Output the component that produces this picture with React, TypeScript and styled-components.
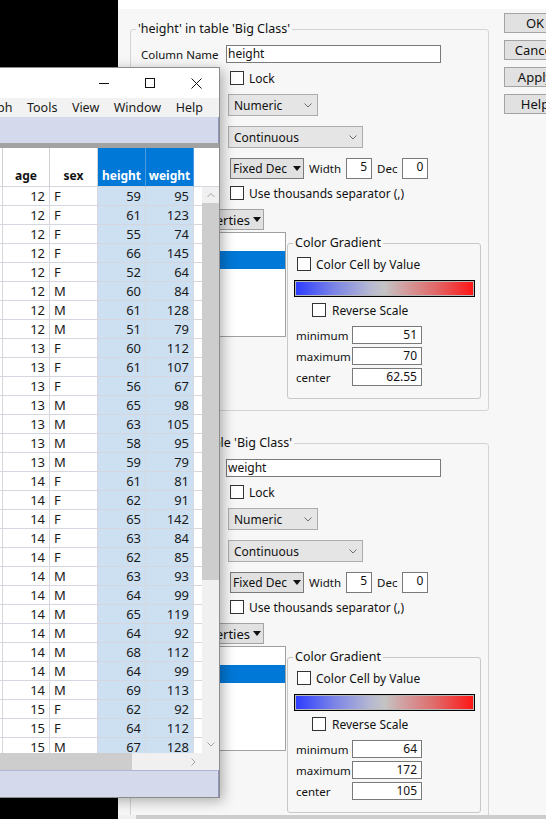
import React from 'react';
import styled, { createGlobalStyle } from 'styled-components';

const GlobalStyle = createGlobalStyle`
  html, body {
    margin: 0;
    padding: 0;
    background: #000;
  }
  body {
    font-family: "Noto Sans", "Liberation Sans", sans-serif;
  }
`;

const Desktop = styled.div`
  position: relative;
  width: 546px;
  height: 819px;
  overflow: hidden;
  background: #000;
`;

/* ---------- column info dialog ---------- */

const Dialog = styled.div`
  position: absolute;
  left: 118px;
  top: 0;
  width: 428px;
  height: 819px;
  display: flex;
  flex-direction: column;
  background: #f7f7f7;
  color: #111;
  font-size: 12px;
`;

const DialogTop = styled.div`
  height: 9px;
  flex-shrink: 0;
  background: #fff;
`;

const DialogBody = styled.div`
  flex: 1;
  min-height: 0;
  display: flex;
  overflow: hidden;
`;

const Pane = styled.div`
  width: 376px;
  flex-shrink: 0;
  box-sizing: border-box;
  padding: 12px 0 0 12px;
  display: flex;
  flex-direction: column;
  gap: 24px;
`;

const ButtonCol = styled.div`
  display: flex;
  flex-direction: column;
  gap: 7px;
  padding-top: 4px;
  margin-left: 10px;
  flex-shrink: 0;
`;

const DlgButton = styled.div`
  width: 62px;
  height: 20px;
  box-sizing: border-box;
  border: 1px solid #a3a3a3;
  background: #e1e1e1;
  font-size: 13px;
  line-height: 18px;
  text-align: center;
`;

const DialogHScroll = styled.div`
  height: 4px;
  flex-shrink: 0;
  display: flex;
  padding-left: 18px;
  background: #f0f0f0;
`;

const HThumb = styled.div`
  flex: 1;
  background: #cdcdcd;
`;

const GroupBox = styled.fieldset`
  margin: 0;
  width: 359px;
  min-width: 0;
  box-sizing: border-box;
  border: 1px solid #d4d4d4;
  border-radius: 3px;
  padding: 0 6px 11px 4px;
  flex-shrink: 0;
`;

const GroupTitle = styled.legend`
  margin-left: 1px;
  padding: 0 2px;
  font-size: 12.5px;
  line-height: 16px;
`;

const Form = styled.div`
  padding-left: 6px;
  display: flex;
  flex-direction: column;
`;

const FieldRow = styled.div<{ $top: number; $h: number }>`
  display: flex;
  align-items: center;
  height: ${(p) => p.$h}px;
  margin-top: ${(p) => p.$top}px;
  white-space: nowrap;
`;

const FieldLabel = styled.div`
  width: 85px;
  flex-shrink: 0;
  font-size: 11.5px;
`;

const TextBox = styled.div<{ $w: number; $shift?: number; $right?: boolean }>`
  width: ${(p) => p.$w}px;
  height: 100%;
  margin-left: ${(p) => p.$shift ?? 0}px;
  box-sizing: border-box;
  border: 1px solid #7a7a7a;
  background: #fff;
  padding: 0 ${(p) => (p.$right ? '4px' : '1px')};
  text-align: ${(p) => (p.$right ? 'right' : 'left')};
  font-size: 12px;
  line-height: 15px;
  flex-shrink: 0;
`;

const Check = styled.span<{ $shift: number }>`
  width: 14px;
  height: 14px;
  margin-left: ${(p) => p.$shift}px;
  box-sizing: border-box;
  border: 1px solid #333;
  background: #fff;
  flex-shrink: 0;
`;

const CheckText = styled.span<{ $gap: number }>`
  margin-left: ${(p) => p.$gap}px;
  font-size: 12px;
`;

const Select = styled.div<{ $w: number }>`
  width: ${(p) => p.$w}px;
  height: 100%;
  margin-left: 2px;
  box-sizing: border-box;
  border: 1px solid #adadad;
  background: #e5e5e5;
  display: flex;
  align-items: center;
  justify-content: space-between;
  padding: 0 5px 0 5px;
  font-size: 12px;
  flex-shrink: 0;
`;

const FormatSelect = styled.div`
  width: 74px;
  height: 100%;
  margin-left: 4px;
  box-sizing: border-box;
  border: 1px solid #7a7a7a;
  background: #e1e1e1;
  display: flex;
  align-items: center;
  justify-content: space-between;
  padding: 0 2px 0 2px;
  font-size: 12px;
  flex-shrink: 0;
`;

const InlineText = styled.span<{ $gap: number }>`
  margin-left: ${(p) => p.$gap}px;
  font-size: 11.5px;
`;

const PropsButton = styled.div`
  width: 128px;
  height: 100%;
  margin-left: -5px;
  box-sizing: border-box;
  border: 1px solid #a3a3a3;
  background: #e1e1e1;
  display: flex;
  align-items: center;
  justify-content: flex-end;
  gap: 3px;
  padding-right: 2px;
  font-size: 13px;
  overflow: hidden;

  & > * {
    flex-shrink: 0;
  }
`;

const LowerRow = styled.div`
  display: flex;
  align-items: flex-start;
  margin-top: 2px;
`;

const ListBox = styled.div`
  width: 145px;
  height: 105px;
  box-sizing: border-box;
  border: 1px solid #a0a0a0;
  background: #fff;
  flex-shrink: 0;
`;

const ListItem = styled.div<{ $sel?: boolean }>`
  height: 18px;
  line-height: 18px;
  padding-left: 3px;
  background: ${(p) => (p.$sel ? '#0078d7' : 'transparent')};
  color: ${(p) => (p.$sel ? '#fff' : '#111')};
`;

const GradientBox = styled.fieldset`
  margin: 3px 0 0 1px;
  width: 194px;
  min-width: 0;
  box-sizing: border-box;
  border: 1px solid #c8c8c8;
  border-radius: 3px;
  padding: 0 5px 12px 5px;
  display: flex;
  flex-direction: column;
`;

const GradientTitle = styled.legend`
  padding: 0 2px;
  font-size: 12.5px;
  line-height: 16px;
`;

const ColorBar = styled.div`
  width: 181px;
  height: 17px;
  margin: 9px 0 0 1px;
  box-sizing: border-box;
  border: 1px solid #000;
  box-shadow: inset 0 0 0 1px #b8b8b8;
  background: linear-gradient(
    to right,
    #2b3bff 0%,
    #7b84e6 22%,
    #b6b8d2 42%,
    #c4c4c4 50%,
    #d1a2a2 60%,
    #e06a6a 78%,
    #ff1414 100%
  );
`;

const ValueLabel = styled.div`
  width: 56px;
  padding-left: 3px;
  flex-shrink: 0;
  font-size: 11.5px;
`;

const Chevron = () => (
  <svg width="8" height="5" viewBox="0 0 8 5" style={{ flexShrink: 0 }}>
    <polyline points="0.5,0.5 4,4 7.5,0.5" fill="none" stroke="#6e6e6e" strokeWidth="1" />
  </svg>
);

const Caret = () => (
  <svg width="8" height="5" viewBox="0 0 8 5" style={{ flexShrink: 0 }}>
    <polygon points="0,0 8,0 4,5" fill="#111" />
  </svg>
);

interface PanelProps {
  name: string;
  min: string;
  max: string;
  center: string;
}

const ColumnPanel = ({ name, min, max, center }: PanelProps) => (
  <GroupBox>
    <GroupTitle>'{name}' in table 'Big Class'</GroupTitle>
    <Form>
      <FieldRow $top={8} $h={18}>
        <FieldLabel>Column Name</FieldLabel>
        <TextBox $w={215}>{name}</TextBox>
      </FieldRow>
      <FieldRow $top={8} $h={14}>
        <FieldLabel />
        <Check $shift={4} />
        <CheckText $gap={5}>Lock</CheckText>
      </FieldRow>
      <FieldRow $top={9} $h={22}>
        <FieldLabel />
        <Select $w={90}>
          Numeric
          <Chevron />
        </Select>
      </FieldRow>
      <FieldRow $top={10} $h={22}>
        <FieldLabel />
        <Select $w={135}>
          Continuous
          <Chevron />
        </Select>
      </FieldRow>
      <FieldRow $top={10} $h={21}>
        <FieldLabel />
        <FormatSelect>
          Fixed Dec
          <Caret />
        </FormatSelect>
        <InlineText $gap={5}>Width</InlineText>
        <TextBox $w={26} $shift={5} $right>
          5
        </TextBox>
        <InlineText $gap={5}>Dec</InlineText>
        <TextBox $w={26} $shift={5} $right>
          0
        </TextBox>
      </FieldRow>
      <FieldRow $top={7} $h={14}>
        <FieldLabel />
        <Check $shift={4} />
        <CheckText $gap={5}>Use thousands separator (,)</CheckText>
      </FieldRow>
      <FieldRow $top={9} $h={21}>
        <PropsButton>
          <span>Column Properties</span>
          <Caret />
        </PropsButton>
      </FieldRow>
      <LowerRow>
        <ListBox>
          <ListItem>Notes</ListItem>
          <ListItem $sel>Axis</ListItem>
        </ListBox>
        <GradientBox>
          <GradientTitle>Color Gradient</GradientTitle>
          <FieldRow $top={6} $h={14}>
            <Check $shift={4} />
            <CheckText $gap={5}>Color Cell by Value</CheckText>
          </FieldRow>
          <ColorBar />
          <FieldRow $top={6} $h={14}>
            <Check $shift={19} />
            <CheckText $gap={6}>Reverse Scale</CheckText>
          </FieldRow>
          <FieldRow $top={9} $h={18}>
            <ValueLabel>minimum</ValueLabel>
            <TextBox $w={70} $right>
              {min}
            </TextBox>
          </FieldRow>
          <FieldRow $top={3} $h={18}>
            <ValueLabel>maximum</ValueLabel>
            <TextBox $w={70} $right>
              {max}
            </TextBox>
          </FieldRow>
          <FieldRow $top={3} $h={18}>
            <ValueLabel>center</ValueLabel>
            <TextBox $w={70} $right>
              {center}
            </TextBox>
          </FieldRow>
        </GradientBox>
      </LowerRow>
    </Form>
  </GroupBox>
);

/* ---------- data table window ---------- */

const TableWindow = styled.div`
  position: absolute;
  left: 0;
  top: 67px;
  width: 220px;
  height: 731px;
  box-sizing: border-box;
  border: 1px solid #8c8c8c;
  border-left: none;
  background: #fff;
  box-shadow: 3px 3px 12px rgba(0, 0, 0, 0.3);
  display: flex;
  flex-direction: column;
  overflow: hidden;
  color: #1a1a1a;
`;

const TitleBar = styled.div`
  height: 30px;
  flex-shrink: 0;
  display: flex;
  justify-content: flex-end;
  background: #fff;
`;

const WinButton = styled.div`
  width: 46px;
  height: 30px;
  display: flex;
  align-items: center;
  justify-content: center;
`;

const MenuBar = styled.div`
  height: 19px;
  flex-shrink: 0;
  display: flex;
  gap: 14.5px;
  background: #f2f2f2;
  font-size: 12.5px;
  line-height: 19px;
  white-space: nowrap;
`;

const MenuItem = styled.span<{ $lead?: number }>`
  margin-left: ${(p) => p.$lead ?? 0}px;
`;

const ToolStrip = styled.div`
  height: 26px;
  flex-shrink: 0;
  box-sizing: border-box;
  background: #d4d9ec;
  border-right: 1px solid #8f95c0;
`;

const StripDivider = styled.div`
  height: 5px;
  flex-shrink: 0;
  background: #a2a2a2;
`;

const HeadGrid = styled.div`
  display: grid;
  grid-template-columns: 3px 47px 48px 48px 48px 25px;
  height: 39px;
  flex-shrink: 0;
`;

const HeadCell = styled.div<{ $sel?: boolean; $plain?: boolean }>`
  box-sizing: border-box;
  display: flex;
  align-items: flex-end;
  justify-content: center;
  padding-bottom: 2px;
  border-right: ${(p) =>
    p.$plain ? 'none' : p.$sel ? '1px solid #4a9be0' : '1px solid #cfcfd6'};
  border-bottom: 1px solid #d6d6e0;
  background: ${(p) => (p.$sel ? '#0078d7' : '#fff')};
  color: ${(p) => (p.$sel ? '#fff' : '#111')};
  font-size: 12px;
  font-weight: 700;
  line-height: 16px;
`;

const BodyArea = styled.div`
  height: 566px;
  flex-shrink: 0;
  display: flex;
`;

const RowsArea = styled.div`
  width: 202px;
  overflow: hidden;
`;

const RowGrid = styled.div`
  display: grid;
  grid-template-columns: 3px 47px 48px 48px 48px 8px;
  grid-auto-rows: 19px;
`;

const Cell = styled.div<{ $align?: 'left' | 'right'; $sel?: boolean }>`
  box-sizing: border-box;
  border-right: 1px solid #d6d6e0;
  border-bottom: 1px solid #d6d6e0;
  background: ${(p) => (p.$sel ? '#cce0f2' : '#fff')};
  text-align: ${(p) => p.$align ?? 'left'};
  padding: 0 4px;
  font-size: 13px;
  line-height: 18px;
  white-space: nowrap;
  overflow: hidden;
`;

const EdgeCell = styled(Cell)`
  padding: 0;
`;

const FillCell = styled(Cell)`
  padding: 0;
  border-right: none;
`;

const VScroll = styled.div`
  width: 17px;
  display: flex;
  flex-direction: column;
  background: #f0f0f0;
`;

const ArrowBox = styled.div<{ $h: number }>`
  height: ${(p) => p.$h}px;
  flex-shrink: 0;
  display: flex;
  align-items: center;
  justify-content: center;
`;

const VThumb = styled.div`
  height: 377px;
  flex-shrink: 0;
  background: #cdcdcd;
`;

const Track = styled.div`
  flex: 1;
`;

const TableHScroll = styled.div`
  height: 17px;
  flex-shrink: 0;
  display: flex;
  background: #f0f0f0;
`;

const TableHThumb = styled.div`
  width: 132px;
  background: #cdcdcd;
`;

const SideBox = styled.div`
  width: 17px;
  display: flex;
  align-items: center;
  justify-content: center;
`;

const StatusBar = styled.div`
  flex: 1;
  box-sizing: border-box;
  background: #d4d9ec;
  border-top: 1px solid #b0b5d6;
  border-right: 1px solid #8f95c0;
`;

const ScrollArrow = ({ dir }: { dir: 'up' | 'down' | 'right' }) => {
  const pts =
    dir === 'up' ? '0.5,4 4,0.5 7.5,4' : dir === 'down' ? '0.5,0.5 4,4 7.5,0.5' : '0.5,0.5 4,4 0.5,7.5';
  const w = dir === 'right' ? 5 : 8;
  const h = dir === 'right' ? 8 : 5;
  return (
    <svg width={w} height={h} viewBox={`0 0 ${w} ${h}`}>
      <polyline points={pts} fill="none" stroke="#a3a3a3" strokeWidth="1" />
    </svg>
  );
};

const rows: [number, string, number, number][] = [
  [12, 'F', 59, 95],
  [12, 'F', 61, 123],
  [12, 'F', 55, 74],
  [12, 'F', 66, 145],
  [12, 'F', 52, 64],
  [12, 'M', 60, 84],
  [12, 'M', 61, 128],
  [12, 'M', 51, 79],
  [13, 'F', 60, 112],
  [13, 'F', 61, 107],
  [13, 'F', 56, 67],
  [13, 'M', 65, 98],
  [13, 'M', 63, 105],
  [13, 'M', 58, 95],
  [13, 'M', 59, 79],
  [14, 'F', 61, 81],
  [14, 'F', 62, 91],
  [14, 'F', 65, 142],
  [14, 'F', 63, 84],
  [14, 'F', 62, 85],
  [14, 'M', 63, 93],
  [14, 'M', 64, 99],
  [14, 'M', 65, 119],
  [14, 'M', 64, 92],
  [14, 'M', 68, 112],
  [14, 'M', 64, 99],
  [14, 'M', 69, 113],
  [15, 'F', 62, 92],
  [15, 'F', 64, 112],
  [15, 'M', 67, 128],
];

const DataTable = () => (
  <TableWindow>
    <TitleBar>
      <WinButton>
        <svg width="10" height="10" viewBox="0 0 10 10">
          <line x1="0" y1="5.5" x2="10" y2="5.5" stroke="#111" strokeWidth="1" />
        </svg>
      </WinButton>
      <WinButton>
        <svg width="10" height="10" viewBox="0 0 10 10">
          <rect x="0.5" y="0.5" width="9" height="9" fill="none" stroke="#111" strokeWidth="1" />
        </svg>
      </WinButton>
      <WinButton>
        <svg width="11" height="11" viewBox="0 0 11 11">
          <line x1="0.5" y1="0.5" x2="10.5" y2="10.5" stroke="#111" strokeWidth="1" />
          <line x1="10.5" y1="0.5" x2="0.5" y2="10.5" stroke="#111" strokeWidth="1" />
        </svg>
      </WinButton>
    </TitleBar>
    <MenuBar>
      <MenuItem $lead={-24}>Graph</MenuItem>
      <MenuItem>Tools</MenuItem>
      <MenuItem>View</MenuItem>
      <MenuItem>Window</MenuItem>
      <MenuItem>Help</MenuItem>
    </MenuBar>
    <ToolStrip />
    <StripDivider />
    <HeadGrid>
      <HeadCell />
      <HeadCell>age</HeadCell>
      <HeadCell>sex</HeadCell>
      <HeadCell $sel>height</HeadCell>
      <HeadCell $sel>weight</HeadCell>
      <HeadCell $plain />
    </HeadGrid>
    <BodyArea>
      <RowsArea>
        <RowGrid>
          {rows.map(([age, sex, h, w], i) => (
            <React.Fragment key={i}>
              <EdgeCell />
              <Cell $align="right">{age}</Cell>
              <Cell>{sex}</Cell>
              <Cell $align="right" $sel>
                {h}
              </Cell>
              <Cell $align="right" $sel>
                {w}
              </Cell>
              <FillCell />
            </React.Fragment>
          ))}
        </RowGrid>
      </RowsArea>
      <VScroll>
        <ArrowBox $h={16}>
          <ScrollArrow dir="up" />
        </ArrowBox>
        <VThumb />
        <Track />
        <ArrowBox $h={17}>
          <ScrollArrow dir="down" />
        </ArrowBox>
      </VScroll>
    </BodyArea>
    <TableHScroll>
      <TableHThumb />
      <Track />
      <SideBox>
        <ScrollArrow dir="right" />
      </SideBox>
      <SideBox />
    </TableHScroll>
    <StatusBar />
  </TableWindow>
);

export default function App() {
  return (
    <>
      <GlobalStyle />
      <Desktop>
        <Dialog>
          <DialogTop />
          <DialogBody>
            <Pane>
              <ColumnPanel name="height" min="51" max="70" center="62.55" />
              <ColumnPanel name="weight" min="64" max="172" center="105" />
            </Pane>
            <ButtonCol>
              {['OK', 'Cancel', 'Apply', 'Help'].map((b) => (
                <DlgButton key={b}>{b}</DlgButton>
              ))}
            </ButtonCol>
          </DialogBody>
          <DialogHScroll>
            <HThumb />
          </DialogHScroll>
        </Dialog>
        <DataTable />
      </Desktop>
    </>
  );
}
